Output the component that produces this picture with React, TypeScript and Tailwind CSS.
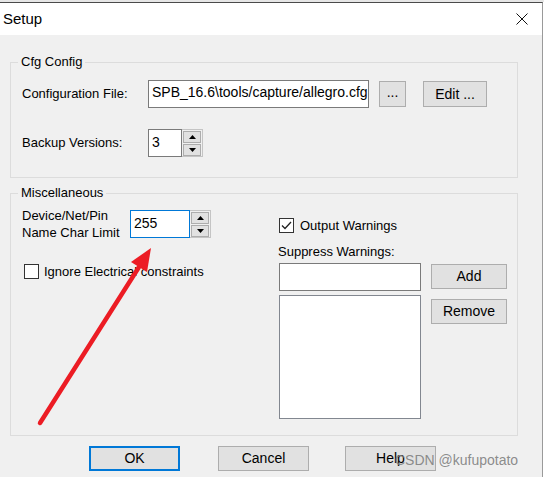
import type { ReactNode } from "react";

const font = "font-['Liberation_Sans',Arial,sans-serif]";

function Spinner({ focused, value, boxW }: { focused?: boolean; value: string; boxW: string }) {
    return (
        <div className="flex h-[28px]">
            <div
                className={`${boxW} h-full bg-white border flex items-center pl-[3px] pb-[2px] text-[14px] ${
                    focused ? "border-[#0078d7]" : "border-[#7a7a7a]"
                }`}
            >
                {value}
            </div>
            <div className="w-[21px] h-full border border-l-0 border-[#c4c4c4] flex flex-col justify-center gap-[1px] px-[1px]">
                <div className="h-[12px] bg-[#e1e1e1] border border-[#adadad] flex items-center justify-center">
                    <svg width="7" height="4" viewBox="0 0 7 4"><polygon points="3.5,0 7,4 0,4" fill="#000" /></svg>
                </div>
                <div className="h-[12px] bg-[#e1e1e1] border border-[#adadad] flex items-center justify-center">
                    <svg width="7" height="4" viewBox="0 0 7 4"><polygon points="0,0 7,0 3.5,4" fill="#000" /></svg>
                </div>
            </div>
        </div>
    );
}

function Btn({ children, className = "" }: { children: ReactNode; className?: string }) {
    return (
        <div className={`bg-[#e1e1e1] border border-[#adadad] flex items-center justify-center text-[14px] ${className}`}>
            {children}
        </div>
    );
}

function CheckBox({ checked }: { checked?: boolean }) {
    return (
        <div className="w-[15px] h-[15px] bg-white border border-[#333] flex items-center justify-center shrink-0">
            {checked && (
                <svg width="11" height="9" viewBox="0 0 11 9">
                    <path d="M1 4.5 L4 7.5 L10 1" fill="none" stroke="#222" strokeWidth="1.3" />
                </svg>
            )}
        </div>
    );
}

function Group({ title, children }: { title: string; children: ReactNode }) {
    return (
        <fieldset className="ml-[10px] w-[508px] border border-[#dcdcdc]">
            <legend className="ml-[7px] px-[3px] text-[13px] leading-[14px]">{title}</legend>
            {children}
        </fieldset>
    );
}

export default function App() {
    return (
        <div className={`relative w-[544px] h-[477px] overflow-hidden bg-white text-black ${font}`}>
            <div className="h-[2px] bg-[#e6e6e6]" />
            <div className="w-[543px] h-[475px] border-t border-r border-t-[#4a4a4a] border-r-[#9a9a9a] flex flex-col">
                {/* タイトルバー */}
                <div className="h-[32px] shrink-0 bg-white flex items-center justify-between pl-[3px] pr-[14px]">
                    <span className="text-[15px]">Setup</span>
                    <svg width="12" height="12" viewBox="0 0 12 12">
                        <path d="M0.5 0.5 L11.5 11.5 M11.5 0.5 L0.5 11.5" stroke="#111" strokeWidth="1" />
                    </svg>
                </div>

                <div className="flex-1 bg-[#f0f0f0] pt-[20px]">
                    {/* Cfg Config */}
                    <Group title="Cfg Config">
                        <div className="pl-[11px] pt-[11px] pb-[20px] text-[13px]">
                            <div className="flex items-center h-[28px]">
                                <span className="w-[126px]">Configuration File:</span>
                                <div className="w-[221px] h-full bg-white border border-[#7a7a7a] flex items-center pl-[3px] pb-[3px] text-[14px] overflow-hidden whitespace-nowrap">
                                    SPB_16.6\tools/capture/allegro.cfg
                                </div>
                                <Btn className="ml-[10px] w-[27px] h-[26px] text-[11px] pb-[3px]">...</Btn>
                                <Btn className="ml-[17px] w-[64px] h-[26px]">Edit ...</Btn>
                            </div>
                            <div className="flex items-center h-[28px] mt-[21px]">
                                <span className="w-[126px]">Backup Versions:</span>
                                <Spinner value="3" boxW="w-[34px]" />
                            </div>
                        </div>
                    </Group>

                    {/* Miscellaneous */}
                    <div className="mt-[8px]">
                        <Group title="Miscellaneous">
                            <div className="flex pl-[11px] pb-[16px] text-[13px]">
                                <div className="w-[257px] pt-[10px]">
                                    <div className="flex items-center h-[28px]">
                                        <span className="w-[108px] leading-[17px] -mt-[1px]">
                                            Device/Net/Pin
                                            <br />
                                            Name Char Limit
                                        </span>
                                        <Spinner value="255" boxW="w-[60px]" focused />
                                    </div>
                                    <div className="flex items-center mt-[24px] ml-[2px] gap-[5px]">
                                        <CheckBox />
                                        <span>Ignore Electrical constraints</span>
                                    </div>
                                </div>
                                <div className="pt-[18px]">
                                    <div className="flex items-center gap-[6px] h-[15px]">
                                        <CheckBox checked />
                                        <span>Output Warnings</span>
                                    </div>
                                    <div className="mt-[11px] leading-[16px] -ml-[1px]">Suppress Warnings:</div>
                                    <div className="flex mt-[3px]">
                                        <div className="w-[142px]">
                                            <div className="h-[28px] bg-white border border-[#7a7a7a]" />
                                            <div className="h-[124px] mt-[4px] bg-white border border-[#828790]" />
                                        </div>
                                        <div className="ml-[10px]">
                                            <Btn className="w-[76px] h-[25px] mt-[1px]">Add</Btn>
                                            <Btn className="w-[76px] h-[25px] mt-[10px]">Remove</Btn>
                                        </div>
                                    </div>
                                </div>
                            </div>
                        </Group>
                    </div>

                    {/* ボタン行 */}
                    <div className="flex mt-[10px]">
                        <div className="ml-[89px] w-[91px] h-[25px] bg-[#e1e1e1] border-2 border-[#0078d7] flex items-center justify-center text-[14px]">
                            OK
                        </div>
                        <Btn className="ml-[38px] w-[91px] h-[25px]">Cancel</Btn>
                        <Btn className="ml-[36px] w-[91px] h-[25px]">Help</Btn>
                    </div>
                </div>
            </div>

            {/* 注釈の矢印 */}
            <svg className="absolute left-0 top-0 pointer-events-none" width="544" height="477" viewBox="0 0 544 477">
                <line x1="40" y1="423" x2="139" y2="267" stroke="#ec1c24" strokeWidth="4.5" strokeLinecap="round" />
                <polygon points="151,248 131,262 147,272" fill="#ec1c24" />
            </svg>

            {/* ウォーターマーク */}
            <div className="absolute left-[395px] top-[451px] text-[14px] leading-[18px] text-[#7f7f7f]/90 whitespace-nowrap">
                CSDN @kufupotato
            </div>
        </div>
    );
}
